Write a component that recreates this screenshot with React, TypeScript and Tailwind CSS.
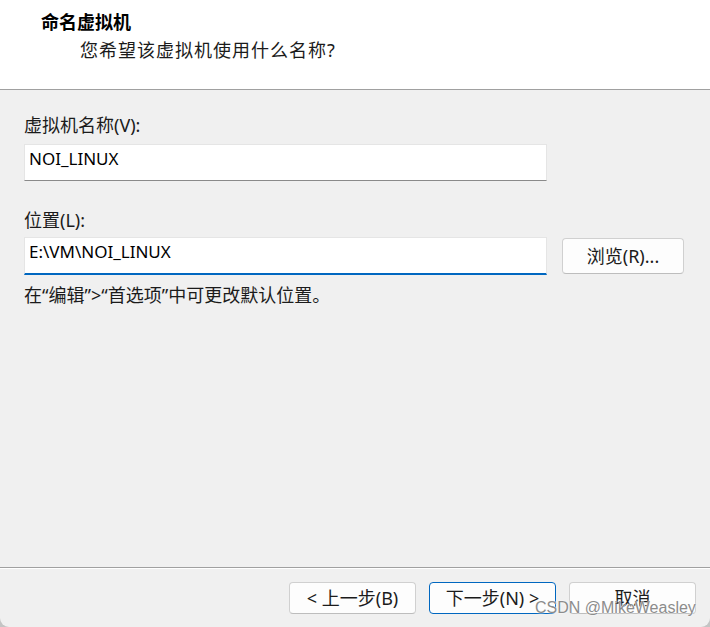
import React from 'react';

const font = { fontFamily: '"Segoe UI", "Noto Sans", "Noto Sans CJK SC", sans-serif' };

function DialogButton({ label, primary }: { label: string; primary?: boolean }) {
  return (
    <button
      className={
        'w-[127px] h-[32px] rounded-[4px] bg-[#fdfdfd] text-[18px] text-[#1b1b1b] flex items-center justify-center ' +
        (primary ? 'border border-[#0067c0]' : 'border border-[#d0d0d0] border-b-[#bdbdbd]')
      }
    >
      {label}
    </button>
  );
}

export default function App() {
  return (
    <div className="w-[710px] h-[627px] bg-[#c4c4c4] overflow-hidden" style={font}>
      <div className="relative w-full h-full bg-[#f0f0f0] rounded-b-[9px] flex flex-col overflow-hidden">
        {/* 标题 */}
        <div className="h-[90px] shrink-0 bg-white border-b border-[#a0a0a0] pt-[9px]">
          <div className="pl-[41px] text-[18px] leading-[26px] font-bold text-black">命名虚拟机</div>
          <div className="pl-[80px] mt-[2px] text-[18px] leading-[26px] tracking-[1px] text-[#1b1b1b]">
            您希望该虚拟机使用什么名称?
          </div>
        </div>

        {/* 内容 */}
        <div className="flex-1 px-[24px] pt-[23px] text-[18px] text-[#1b1b1b]">
          <div className="leading-[24px]">虚拟机名称(V):</div>
          <div className="mt-[7px] w-[523px] h-[37px] bg-white border border-[#e5e5e5] border-b-[#8a8a8a] flex items-center px-[4px] pb-[8px] text-[17px] text-black">
            NOI_LINUX
          </div>

          <div className="mt-[27px] leading-[24px]">位置(L):</div>
          <div className="mt-[5px] flex items-center">
            <div className="w-[523px] h-[38px] bg-white border border-[#e5e5e5] border-b-2 border-b-[#0067c0] flex items-center px-[4px] pb-[8px] text-[17px] text-black">
              E:\VM\NOI_LINUX
            </div>
            <button className="ml-[15px] w-[122px] h-[36px] rounded-[4px] bg-[#fdfdfd] border border-[#d0d0d0] border-b-[#bdbdbd] text-[18px] text-[#1b1b1b] flex items-center justify-center">
              浏览(R)...
            </button>
          </div>

          <div className="mt-[8px] leading-[24px]">在“编辑”&gt;“首选项”中可更改默认位置。</div>
        </div>

        {/* 按钮栏 */}
        <div className="h-[60px] shrink-0 border-t border-[#a0a0a0] shadow-[inset_0_1px_0_#ffffff] flex items-start justify-end gap-[13px] pt-[14px] pr-[14px]">
          <DialogButton label="< 上一步(B)" />
          <DialogButton label="下一步(N) >" primary />
          <DialogButton label="取消" />
        </div>

        <div
          className="absolute left-[535px] top-[597px] text-[16px] leading-[22px] text-[#8c8c8c] whitespace-nowrap"
          style={{ fontFamily: '"Liberation Sans", Arial, sans-serif', textShadow: '0 0 2px #ffffff, 0 0 1px #ffffff' }}
        >
          CSDN @MikeWeasley
        </div>
      </div>
    </div>
  );
}
